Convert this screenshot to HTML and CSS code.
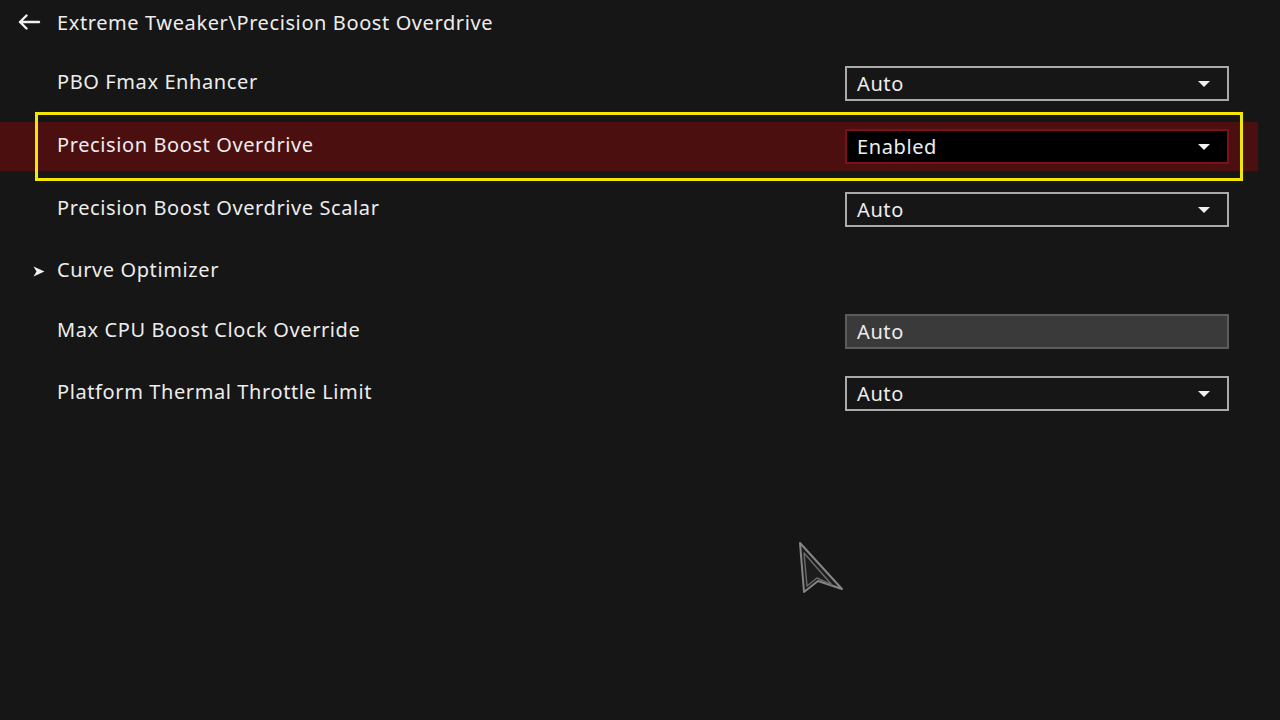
FILE: index.html
```html
<!DOCTYPE html>
<html lang="en">
<head>
    <meta charset="UTF-8">
    <title>Extreme Tweaker\Precision Boost Overdrive</title>
    <link rel="stylesheet" href="styles.css">
</head>
<body>
    <div class="header">
        <svg class="back" width="24" height="16" viewBox="0 0 24 16">
            <path d="M22 8H3M9.5 1.5L3 8l6.5 6.5" fill="none" stroke="#f0f0f0" stroke-width="2.4" stroke-linecap="round" stroke-linejoin="round"/>
        </svg>
        <span>Extreme Tweaker\Precision Boost Overdrive</span>
    </div>

    <div class="list">
        <div class="row">
            <div class="label">PBO Fmax Enhancer</div>
            <div class="select">Auto<span class="caret"></span></div>
        </div>
        <div class="row selected">
            <div class="label">Precision Boost Overdrive</div>
            <div class="select">Enabled<span class="caret"></span></div>
        </div>
        <div class="row">
            <div class="label">Precision Boost Overdrive Scalar</div>
            <div class="select">Auto<span class="caret"></span></div>
        </div>
        <div class="row link">
            <svg class="sub" width="12" height="11" viewBox="0 0 12 11">
                <path d="M0.5 0.5L11.5 5.5L0.5 10.5L3.5 5.5Z" fill="#f0f0f0"/>
            </svg>
            <div class="label">Curve Optimizer</div>
        </div>
        <div class="row readonly">
            <div class="label">Max CPU Boost Clock Override</div>
            <div class="select">Auto</div>
        </div>
        <div class="row">
            <div class="label">Platform Thermal Throttle Limit</div>
            <div class="select">Auto<span class="caret"></span></div>
        </div>
    </div>

    <!-- mouse pointer -->
    <svg class="pointer" width="46" height="54" viewBox="0 0 46 54">
        <path d="M2 2L44 48L20 40L6 51Z" fill="#1c1c1c" stroke="#858585" stroke-width="2" stroke-linejoin="round"/>
        <path d="M6 12L34 44L19 37L9 45Z" fill="none" stroke="#6a6a6a" stroke-width="1.5" stroke-linejoin="round"/>
    </svg>
</body>
</html>
```

FILE: styles.css
```css
body {
    margin: 0;
    height: 720px;
    background: #161616;
    color: #ededed;
    font-family: "Noto Sans", "Open Sans", sans-serif;
    font-size: 20px;
    letter-spacing: 0.6px;
    overflow: hidden;
    position: relative;
}
.header {
    display: flex;
    align-items: center;
    height: 44px;
    padding-left: 17px;
}
.header .back { margin-right: 16px; }
.list {
    padding-top: 8px;
}
.row {
    position: relative;
    z-index: 0;
    display: flex;
    align-items: center;
    height: 63px;
    margin-left: 38px;
    width: 1202px;
    padding-left: 19px;
    box-sizing: border-box;
}
.row .label {
    flex: 1;
    padding-bottom: 4px;
}
.row.link { height: 60px; }
.row.readonly { height: 61px; }
.row.selected {
    outline: 3px solid #f3e600;
}
.row.selected::before {
    content: "";
    position: absolute;
    z-index: -1;
    left: -38px;
    right: -18px;
    top: 7px;
    bottom: 7px;
    background: #4c0f10;
}
.sub {
    position: absolute;
    left: -5px;
    top: 25px;
}
.select {
    display: flex;
    align-items: center;
    width: 384px;
    height: 35px;
    box-sizing: border-box;
    border: 2px solid #aaaaaa;
    background: #161616;
    padding: 0 17px 0 10px;
    margin-right: 11px;
    line-height: 1;
}
.caret {
    margin-left: auto;
    width: 0;
    height: 0;
    border-left: 6px solid transparent;
    border-right: 6px solid transparent;
    border-top: 6px solid #f0f0f0;
}
.selected .select {
    background: #000;
    border-color: #7e0f1c;
}
.readonly .select {
    background: #3a3a3a;
    border-color: #5c5c5c;
}
.pointer {
    position: absolute;
    left: 798px;
    top: 541px;
}
```
